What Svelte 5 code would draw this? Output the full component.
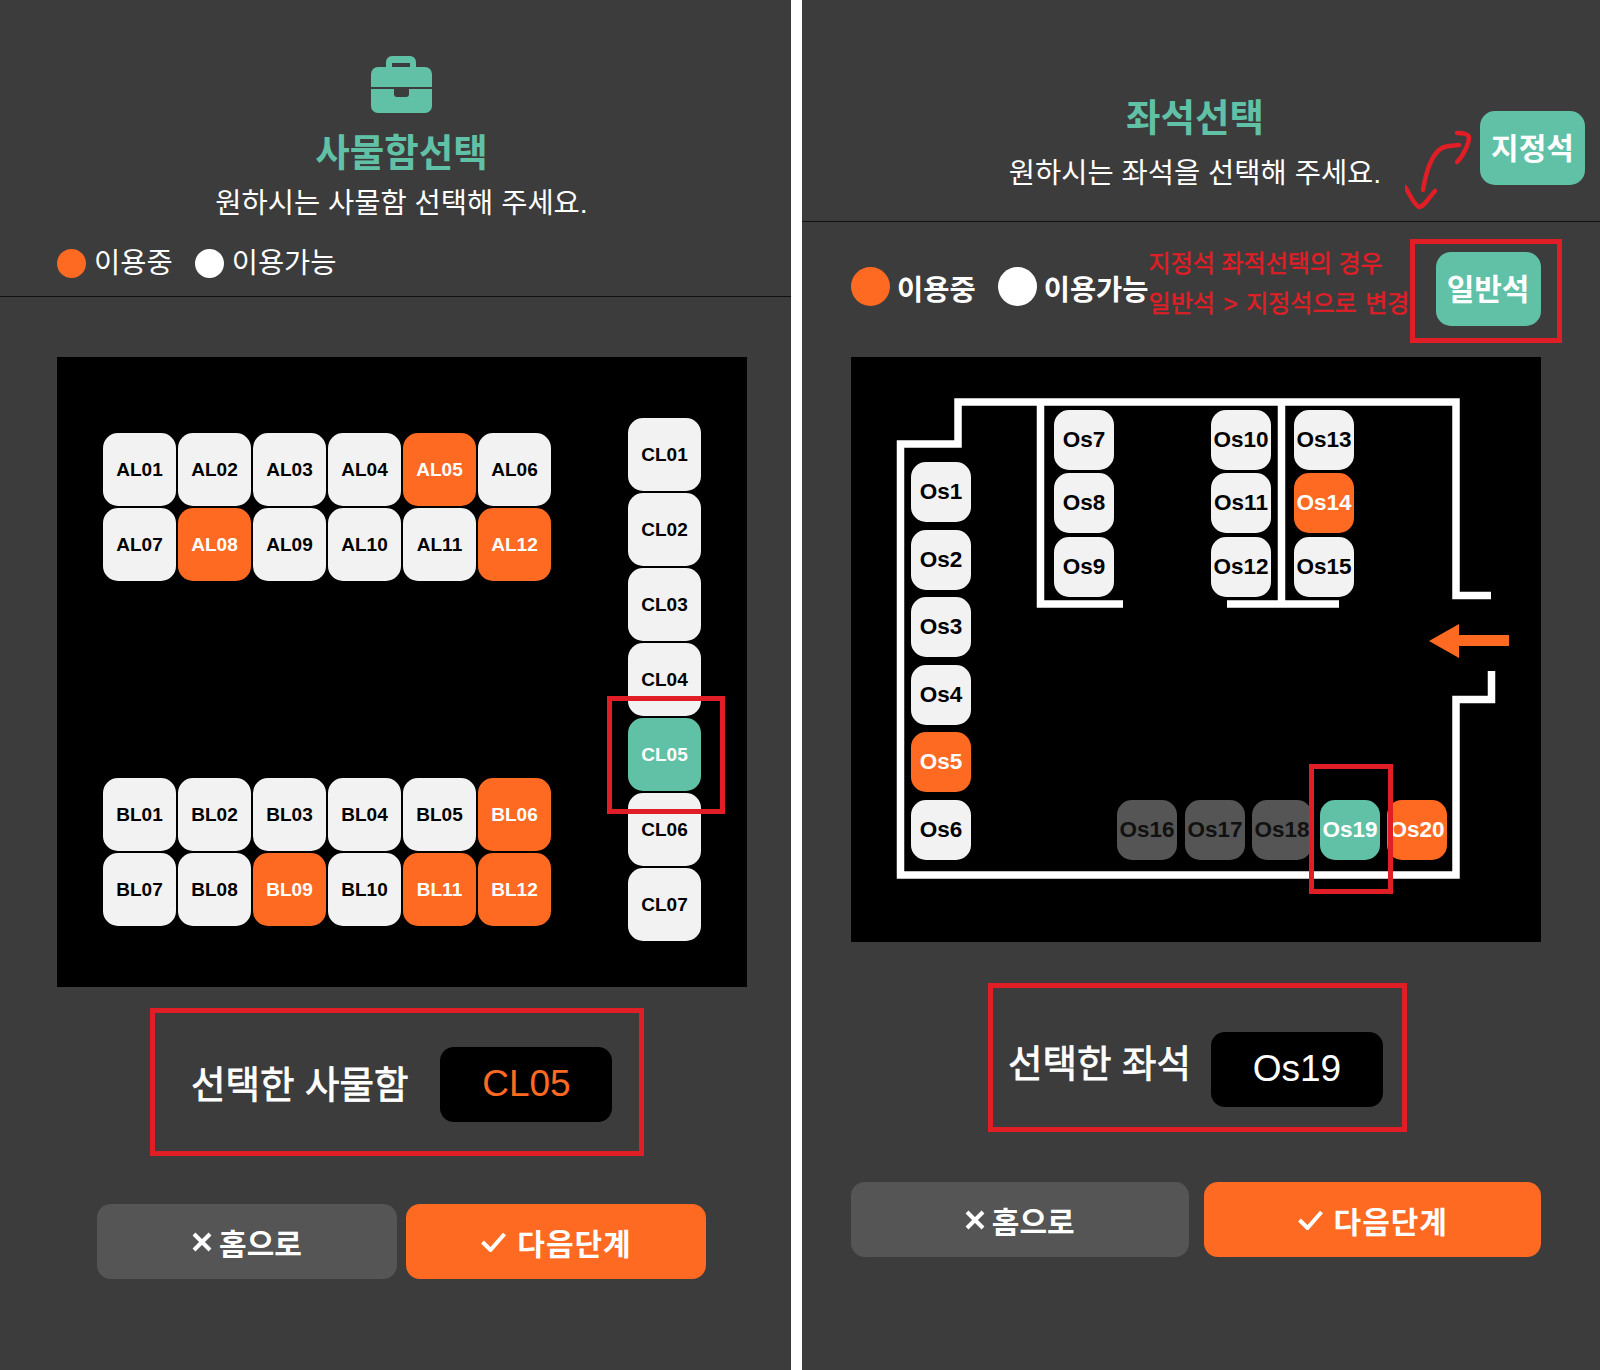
<script>
  const taken = ['AL05', 'AL08', 'AL12', 'BL06', 'BL09', 'BL11', 'BL12', 'Os5', 'Os14', 'Os20'];
  const picked = ['CL05', 'Os19'];
  const off = ['Os16', 'Os17', 'Os18'];

  const names = (prefix, n) =>
    Array(n).fill(0).map((_, i) => prefix + String(i + 1).padStart(2, '0'));

  const lockersA = names('AL', 12);
  const lockersB = names('BL', 12);
  const lockersC = names('CL', 7);

  const seats = [
    ...[105, 173, 240, 308, 375, 443].map((y, i) => ({ id: 'Os' + (i + 1), x: 60, y })),
    ...[53, 116, 180].map((y, i) => ({ id: 'Os' + (i + 7), x: 203, y })),
    ...[53, 116, 180].map((y, i) => ({ id: 'Os' + (i + 10), x: 360, y })),
    ...[53, 116, 180].map((y, i) => ({ id: 'Os' + (i + 13), x: 443, y })),
    ...[266, 334, 401, 469, 536].map((x, i) => ({ id: 'Os' + (i + 16), x, y: 443 }))
  ];

  const state = (id) =>
    taken.includes(id) ? 'taken' : picked.includes(id) ? 'picked' : off.includes(id) ? 'off' : '';
</script>

{#snippet briefcase()}
  <svg class="case" viewBox="0 0 62 58" aria-hidden="true">
    <path fill-rule="evenodd" d="M7 11H15V6a6 6 0 0 1 6-6H39a6 6 0 0 1 6 6V11H54a7 7 0 0 1 7 7V31H0V18a7 7 0 0 1 7-7ZM21 7V11H39V7Z" />
    <path d="M0 33H23V38a3 3 0 0 0 3 3H35a3 3 0 0 0 3-3V33H61V50a7 7 0 0 1-7 7H7a7 7 0 0 1-7-7Z" />
  </svg>
{/snippet}

{#snippet actions()}
  <div class="actions">
    <button class="act home">
      <svg viewBox="0 0 20 20" aria-hidden="true"><path d="M2 2 18 18M18 2 2 18" /></svg>
      홈으로
    </button>
    <button class="act next">
      <svg class="tick" viewBox="0 0 26 20" aria-hidden="true"><path d="M2 10 10 18 24 2" /></svg>
      다음단계
    </button>
  </div>
{/snippet}

<div class="page">
  <section class="panel left">
    <header class="head-left">
      {@render briefcase()}
      <h1>사물함선택</h1>
      <p class="sub">원하시는 사물함 선택해 주세요.</p>
      <div class="legend">
        <span class="dot orange"></span><span class="leg-text">이용중</span>
        <span class="dot white"></span><span class="leg-text">이용가능</span>
      </div>
    </header>

    <div class="board lockers">
      <div class="rows">
        <div class="grid6">
          {#each lockersA as id}
            <div class="cell {state(id)}">{id}</div>
          {/each}
        </div>
        <div class="grid6">
          {#each lockersB as id}
            <div class="cell {state(id)}">{id}</div>
          {/each}
        </div>
      </div>
      <div class="column">
        {#each lockersC as id}
          <div class="cell {state(id)}">{id}</div>
        {/each}
      </div>
      <div class="mark mark-locker"></div>
    </div>

    <div class="chosen chosen-left">
      <span class="chosen-label">선택한 사물함</span>
      <span class="chip hot">CL05</span>
    </div>

    <div class="act-wrap act-left">{@render actions()}</div>
  </section>

  <section class="panel right">
    <header class="head-right">
      <div class="head-col">
        <h1>좌석선택</h1>
        <p class="sub">원하시는 좌석을 선택해 주세요.</p>
      </div>
      <div class="pill pill-top">지정석</div>
      <svg class="scribble" viewBox="0 0 80 80" aria-hidden="true">
        <path d="M52 3C58 3 63 4 64 7C64 12 60 24 52 32" />
        <path d="M54 15C46 16 40 15 34 20C26 27 21 42 18 60" />
        <path d="M0 57C4 62 8 74 14 77C19 77 25 66 30 61" />
      </svg>
    </header>

    <div class="legend-row">
      <span class="dot big orange"></span><span class="leg-text strong">이용중</span>
      <span class="dot big white gap"></span><span class="leg-text strong">이용가능</span>
      <div class="note">
        <span>지정석 좌적선택의 경우</span>
        <span class="wide">일반석 &gt; 지정석으로 변경</span>
      </div>
      <div class="pill-box"><div class="pill">일반석</div></div>
    </div>

    <div class="board map">
      <svg class="walls" viewBox="0 0 690 585" aria-hidden="true">
        <path d="M640 238.5H605V45H107V87H49.5V518H605V342.5H640.5V314" />
        <path d="M189.5 45V247H272" />
        <path d="M430.5 45V247M376 247H488" />
      </svg>
      <svg class="door" viewBox="0 0 80 34" aria-hidden="true">
        <path d="M0 17 30 0V11H80V22H30V34Z" />
      </svg>
      {#each seats as s}
        <div class="cell seat {state(s.id)}" style="left:{s.x}px;top:{s.y}px">{s.id}</div>
      {/each}
      <div class="mark mark-seat"></div>
    </div>

    <div class="chosen chosen-right">
      <span class="chosen-label">선택한 좌석</span>
      <span class="chip">Os19</span>
    </div>

    <div class="act-wrap act-right">{@render actions()}</div>
  </section>
</div>

<style>
  :global(body) {
    margin: 0;
    background: #fff;
  }
  .page {
    display: flex;
    width: 1600px;
    height: 1370px;
    overflow: hidden;
    font-family: "Liberation Sans", "Noto Sans CJK KR", sans-serif;
    color: #fff;
  }
  .panel {
    background: #3c3c3c;
    height: 1370px;
  }
  .left {
    width: 791px;
    margin-right: 11px;
  }
  .right {
    width: 798px;
  }
  h1 {
    margin: 0;
    font-size: 37.5px;
    line-height: 50px;
    font-weight: 700;
    color: #61c1a7;
    text-align: center;
  }
  .sub {
    margin: 0;
    font-size: 28.5px;
    line-height: 40px;
    text-align: center;
  }
  .head-left {
    height: 296px;
    padding-left: 12px;
    box-sizing: content-box;
    width: 779px;
    border-bottom: 1px solid #111;
    display: flex;
    flex-direction: column;
    align-items: center;
  }
  .case {
    width: 62px;
    height: 58px;
    margin-top: 56px;
    fill: #61c1a7;
  }
  .head-left h1 {
    margin-top: 14px;
  }
  .head-left .sub {
    margin-top: 5px;
  }
  .legend {
    align-self: flex-start;
    display: flex;
    align-items: center;
    margin: 22px 0 0 45px;
  }
  .dot {
    width: 29px;
    height: 29px;
    border-radius: 50%;
    flex: none;
  }
  .dot.big {
    width: 39px;
    height: 39px;
    margin-top: -6px;
  }
  .orange {
    background: #ff6a22;
  }
  .white {
    background: #fff;
  }
  .leg-text {
    font-size: 28.5px;
    line-height: 36px;
    margin-left: 8px;
    margin-right: 22px;
  }
  .leg-text.strong {
    font-weight: 700;
    margin-left: 7px;
    margin-right: 22px;
  }
  .board {
    position: relative;
    width: 690px;
    background: #000;
  }
  .lockers {
    display: flex;
    height: 630px;
    margin: 60px 0 0 57px;
    box-sizing: border-box;
    padding: 61px 46px 0;
  }
  .rows {
    width: 448px;
    padding-top: 15px;
    display: flex;
    flex-direction: column;
    gap: 197px;
  }
  .grid6 {
    display: grid;
    grid-template-columns: repeat(6, 73px);
    grid-auto-rows: 73px;
    gap: 2px;
  }
  .column {
    display: flex;
    flex-direction: column;
    gap: 2px;
    width: 73px;
    margin-left: 77px;
  }
  .cell {
    width: 73px;
    height: 73px;
    flex: none;
    display: flex;
    align-items: center;
    justify-content: center;
    border-radius: 15px;
    background: #f2f2f2;
    color: #000;
    font-size: 19px;
    font-weight: 700;
  }
  .cell.taken {
    background: #ff6a22;
    color: #fff;
  }
  .cell.picked {
    background: #61c1a7;
    color: #fff;
  }
  .cell.off {
    background: #555;
    color: #111;
  }
  .seat {
    position: absolute;
    width: 60px;
    height: 60px;
    font-size: 22.5px;
    white-space: nowrap;
  }
  .mark {
    position: absolute;
    border: 5px solid #e11d26;
    box-sizing: border-box;
  }
  .mark-locker {
    left: 550px;
    top: 339px;
    width: 118px;
    height: 118px;
  }
  .mark-seat {
    left: 458px;
    top: 407px;
    width: 84px;
    height: 130px;
  }
  .chosen {
    display: flex;
    align-items: center;
    box-sizing: border-box;
    border: 5px solid #e11d26;
  }
  .chosen-label {
    font-size: 37.5px;
    line-height: 50px;
    font-weight: 400;
    -webkit-text-stroke: 0.8px #fff;
  }
  .chip {
    width: 172px;
    height: 75px;
    display: flex;
    align-items: center;
    justify-content: center;
    background: #000;
    border-radius: 14px;
    font-size: 37px;
  }
  .chip.hot {
    color: #ff6a22;
  }
  .chosen-left {
    width: 494px;
    height: 148px;
    margin: 21px 0 0 150px;
    padding-left: 36px;
    gap: 32px;
  }
  .chosen-left .chosen-label {
    margin-top: 6px;
  }
  .chosen-left .chip {
    margin-top: 4px;
  }
  .chosen-right {
    width: 419px;
    height: 149px;
    margin: 41px 0 0 186px;
    padding-left: 15px;
    gap: 20px;
  }
  .chosen-right .chosen-label {
    margin-top: 13px;
  }
  .chosen-right .chip {
    margin-top: 23px;
  }
  .actions {
    display: flex;
  }
  .act {
    display: flex;
    align-items: center;
    justify-content: center;
    gap: 7px;
    height: 75px;
    border: 0;
    border-radius: 14px;
    font-family: inherit;
    font-size: 30px;
    font-weight: 700;
    color: #fff;
  }
  .act svg {
    width: 20px;
    height: 20px;
    fill: none;
    stroke: #fff;
    stroke-width: 4;
  }
  .act svg.tick {
    width: 27px;
  }
  .home {
    background: #555;
  }
  .next {
    background: #ff6a22;
    letter-spacing: 1px;
    gap: 10px;
  }
  .act-left {
    margin: 48px 0 0 97px;
  }
  .act-left .actions {
    gap: 9px;
  }
  .act-left .act {
    width: 300px;
  }
  .act-right {
    margin: 50px 0 0 49px;
  }
  .act-right .actions {
    gap: 15px;
  }
  .act-right .act {
    width: 337.5px;
  }
  .head-right {
    position: relative;
    display: flex;
    align-items: flex-start;
    height: 221px;
    border-bottom: 1px solid #111;
  }
  .head-col {
    width: 570px;
    margin: 93px 0 0 108px;
  }
  .head-col .sub {
    margin-top: 10px;
  }
  .pill {
    width: 105px;
    height: 74px;
    padding-bottom: 4px;
    box-sizing: border-box;
    display: flex;
    align-items: center;
    justify-content: center;
    border-radius: 15px;
    background: #61c1a7;
    font-size: 30px;
    font-weight: 700;
    color: #fff;
  }
  .pill-top {
    margin-top: 111px;
  }
  .scribble {
    position: absolute;
    left: 603px;
    top: 130px;
    width: 80px;
    height: 80px;
    fill: none;
    stroke: #e11d26;
    stroke-width: 4.5;
    stroke-linecap: round;
    stroke-linejoin: round;
  }
  .legend-row {
    display: flex;
    align-items: center;
    height: 135px;
    padding-left: 49px;
  }
  .note {
    display: flex;
    flex-direction: column;
    gap: 10px;
    width: 261px;
    margin: -12px 0 0 -22px;
    font-size: 24px;
    line-height: 30px;
    font-weight: 400;
    -webkit-text-stroke: 0.5px #e11d26;
    color: #e11d26;
    white-space: nowrap;
  }
  .wide {
    word-spacing: 2px;
  }
  .pill-box {
    display: flex;
    align-items: center;
    justify-content: center;
    width: 152px;
    height: 104px;
    box-sizing: border-box;
    border: 5px solid #e11d26;
    margin-top: 3px;
    padding: 0 0 4px 5px;
  }
  .map {
    height: 585px;
    margin-left: 49px;
  }
  .walls {
    position: absolute;
    inset: 0;
    width: 690px;
    height: 585px;
    fill: none;
    stroke: #fff;
    stroke-width: 7.5;
  }
  .door {
    position: absolute;
    left: 578px;
    top: 267px;
    width: 80px;
    height: 34px;
    fill: #ff6a22;
  }
</style>
